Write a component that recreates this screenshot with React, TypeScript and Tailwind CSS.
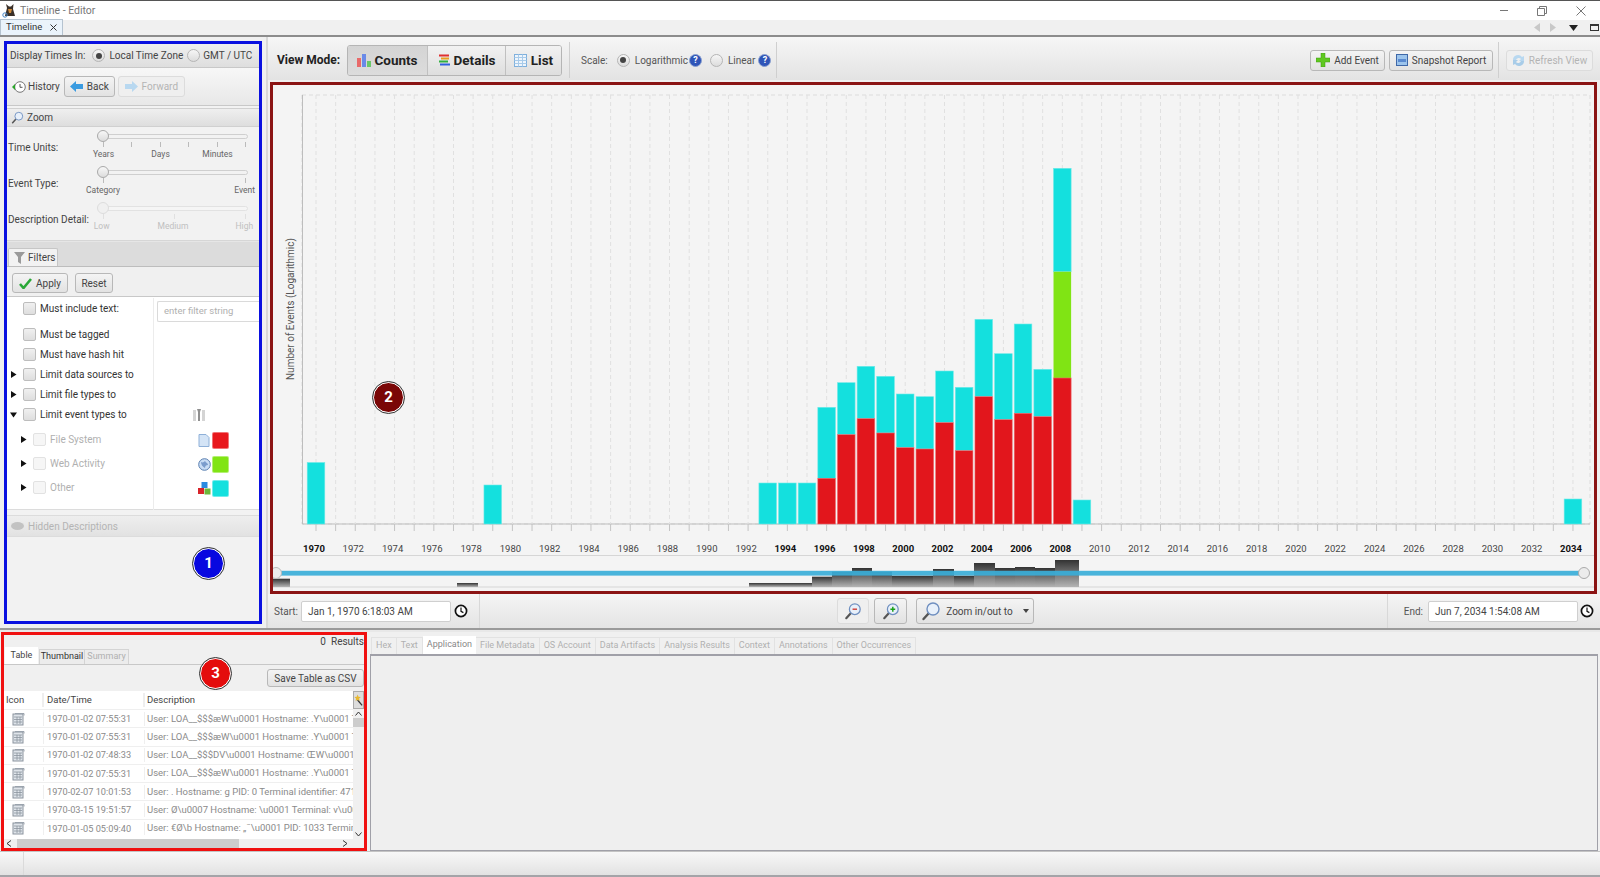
import type { ReactNode } from 'react'

const barWidth = 17.6
const yearX = (year: number) => 316 + 19.64 * (year - 1970)

// year, cyan top, green top, red top, all in page pixels
const bars: [number, number, number | null, number | null][] = [
  [1970, 462.5, null, null],
  [1979, 485, null, null],
  [1993, 483, null, null],
  [1994, 483, null, null],
  [1995, 483, null, null],
  [1996, 407.3, null, 478.3],
  [1997, 382.7, null, 434.7],
  [1998, 366.3, null, 418.7],
  [1999, 376.3, null, 433],
  [2000, 394, null, 447.7],
  [2001, 396.7, null, 449],
  [2002, 371, null, 422.7],
  [2003, 387.3, null, 450.7],
  [2004, 319.3, null, 396.7],
  [2005, 353.7, null, 419.7],
  [2006, 324, null, 413.3],
  [2007, 369.3, null, 416.7],
  [2008, 168.3, 271.7, 378],
  [2009, 500, null, null],
  [2034, 499, null, null],
]

const overview: [number, number, number][] = [
  [271, 19, 578.7],
  [457, 21, 583],
  [749, 21, 583],
  [770, 21, 583],
  [791, 21, 583],
  [812, 20, 576.7],
  [832, 20, 571.7],
  [852, 20, 568],
  [872, 20, 571.7],
  [892, 21, 575.7],
  [913, 20, 575.7],
  [933, 21, 569],
  [954, 20, 575.7],
  [974, 21, 563],
  [995, 20, 568],
  [1015, 20, 567],
  [1035, 20, 568],
  [1055, 24, 560],
]

const boldYears = [1970, 1994, 1996, 1998, 2000, 2002, 2004, 2006, 2008, 2034]

const rows = [
  ['1970-01-02 07:55:31', 'User: LOA__$$$æW\\u0001 Hostname: .Y\\u0001 Terminal: 0 PID: 1033'],
  ['1970-01-02 07:55:31', 'User: LOA__$$$æW\\u0001 Hostname: .Y\\u0001 Terminal: 0 PID: 1033'],
  ['1970-01-02 07:48:33', 'User: LOA__$$$DV\\u0001 Hostname: ŒW\\u0001 Terminal: 0 PID: 1033'],
  ['1970-01-02 07:55:31', 'User: LOA__$$$æW\\u0001 Hostname: .Y\\u0001 Terminal: 0 PID: 1033'],
  ['1970-02-07 10:01:53', 'User: . Hostname: g PID: 0 Terminal identifier: 4718592 Session'],
  ['1970-03-15 19:51:57', 'User: Ø\\u0007 Hostname: \\u0001 Terminal: v\\u0000 PID: 1033 Session'],
  ['1970-01-05 05:09:40', 'User: €Ø\\b Hostname: „˜\\u0001 PID: 1033 Terminal identifier: 0'],
]

function Clock() {
  return (
    <svg width="14" height="14" viewBox="0 0 14 14" className="shrink-0">
      <circle cx="7" cy="7" r="5.6" fill="#fff" stroke="#111" strokeWidth="1.7" />
      <path d="M7 3.6V7.3L9.4 8.6" fill="none" stroke="#111" strokeWidth="1.2" />
    </svg>
  )
}

function Magnifier({ size = 14, sign }: { size?: number; sign?: 'plus' | 'minus' }) {
  return (
    <svg width={size} height={size} viewBox="0 0 20 20" className="shrink-0">
      <path d="M8 12L2.5 18" stroke="#555" strokeWidth="2.4" strokeLinecap="round" />
      <circle cx="12" cy="8" r="6" fill="#e8f0fa" stroke="#6f8fc0" strokeWidth="1.4" />
      {sign === 'minus' ? <path d="M9.5 8h5" stroke="#d0403a" strokeWidth="1.6" /> : null}
      {sign === 'plus' ? <path d="M9.3 8h5.4M12 5.3v5.4" stroke="#18a018" strokeWidth="1.6" /> : null}
    </svg>
  )
}

function Help() {
  return (
    <span className="flex h-[13px] w-[13px] items-center justify-center rounded-full border border-[#8aa0d0] bg-[#2f55b8] text-[9px] font-bold leading-none text-white">
      ?
    </span>
  )
}

function Radio({ on }: { on?: boolean }) {
  return (
    <span className="flex h-[13px] w-[13px] shrink-0 items-center justify-center rounded-full border border-[#b5b5b5] bg-linear-to-b from-[#f6f6f6] to-[#dcdcdc]">
      {on ? <span className="h-[6px] w-[6px] rounded-full bg-[#444]" /> : null}
    </span>
  )
}

function Check({ faint }: { faint?: boolean }) {
  return (
    <span
      className={
        'h-[13px] w-[13px] shrink-0 rounded-[2px] border ' +
        (faint ? 'border-[#e2e2e2] bg-[#f6f6f6]' : 'border-[#bdbdbd] bg-linear-to-b from-[#f0f0f0] to-[#dedede]')
      }
    />
  )
}

function Button({ children, className, faint }: { children: ReactNode; className?: string; faint?: boolean }) {
  return (
    <div
      className={
        'flex items-center justify-center gap-1 whitespace-nowrap rounded-[3px] border text-[10px] ' +
        (faint
          ? 'border-[#dcdcdc] bg-[#efefef] text-[#b4b4b4] '
          : 'border-[#b8b8b8] bg-linear-to-b from-[#f4f4f4] to-[#e2e2e2] text-[#444] ') +
        (className || '')
      }
    >
      {children}
    </div>
  )
}

function Slider({
  ticks,
  labels,
  labelBox,
  label,
  faint,
}: {
  ticks: number
  labels: string[]
  labelBox: string
  label: string
  faint?: boolean
}) {
  return (
    <div className="relative flex h-[36px]">
      <span className="absolute left-0 top-[8px] whitespace-nowrap text-[10px] text-[#444]">{label}</span>
      <div className="relative ml-[91px] w-[149px]">
        <div className={'absolute left-0 right-0 top-[2px] h-[5px] rounded-full border ' + (faint ? 'border-[#e2e2e2] bg-[#f5f5f5]' : 'border-[#cfcfcf] bg-[#f2f2f2]')} />
        <div className={'absolute left-[-2px] top-[-2px] h-[12px] w-[12px] rounded-full border ' + (faint ? 'border-[#dddddd] bg-[#f0f0f0]' : 'border-[#a9a9a9] bg-linear-to-b from-[#f8f8f8] to-[#dcdcdc]')} />
        <div className="absolute left-[4px] right-[2px] top-[10px] flex justify-between">
          {Array.from({ length: ticks }).map((_, i) => (
            <span key={i} className={'h-[5px] w-px ' + (faint ? 'bg-[#e0e0e0]' : 'bg-[#bbb]')} />
          ))}
        </div>
        <div className={'absolute top-[16px] text-[8.5px] ' + labelBox + (faint ? ' text-[#c0c0c0]' : ' text-[#666]')}>
          {labels.map((text) => (
            <span key={text}>{text}</span>
          ))}
        </div>
      </div>
    </div>
  )
}

function Arrow({ open }: { open?: boolean }) {
  return (
    <svg width="7" height="7" viewBox="0 0 7 7" className="shrink-0">
      <path d={open ? 'M0 1.5H7L3.5 6.5Z' : 'M1 0L6.5 3.5L1 7Z'} fill="#111" />
    </svg>
  )
}

function FilterRow({ label, arrow, open, className }: { label: string; arrow?: boolean; open?: boolean; className?: string }) {
  return (
    <div className={'flex h-[20px] items-center ' + (className || '')}>
      <span className="flex w-[16px] shrink-0 justify-start pl-[3px]">{arrow ? <Arrow open={open} /> : null}</span>
      <Check />
      <span className="ml-[4px] whitespace-nowrap text-[10px] text-[#333]">{label}</span>
    </div>
  )
}

function SubRow({ label, swatch, icon }: { label: string; swatch: string; icon: ReactNode }) {
  return (
    <div className="flex h-[24px] items-center">
      <span className="ml-[13px] flex w-[13px] shrink-0"><Arrow /></span>
      <Check faint />
      <span className="ml-[4px] w-[103px] whitespace-nowrap text-[10px] text-[#b0b0b0]">{label}</span>
      <span className="ml-[44px] mt-[3px] flex w-[14px] justify-center">{icon}</span>
      <span className={'ml-[1px] mt-[3px] h-[17px] w-[17px] rounded-[2px] border border-white/40 ' + swatch} />
    </div>
  )
}

function Badge({ n, className }: { n: number; className: string }) {
  return (
    <div
      className={
        'absolute flex h-[31px] w-[31px] items-center justify-center rounded-full border border-white text-[15px] font-bold text-white outline outline-1 outline-[#333] ' +
        className
      }
    >
      {n}
    </div>
  )
}

function TableIcon() {
  return (
    <svg width="13" height="14" viewBox="0 0 13 14">
      <rect x="1" y="2" width="10" height="11" fill="#dfe4ea" stroke="#8b949e" />
      <path d="M2 5h8M2 7.5h8M2 10h8M5 5v7M8 5v7" stroke="#8b949e" strokeWidth="0.8" />
      <path d="M3 1.5h9v2" fill="none" stroke="#9aa3ad" />
    </svg>
  )
}

function Chart() {
  const gridYears = Array.from({ length: 65 }, (_, i) => 1970 + i)
  const labelYears = Array.from({ length: 33 }, (_, i) => 1970 + i * 2)
  return (
    <svg width="1321" height="506" viewBox="273 85 1321 506" className="block">
      <defs>
        <linearGradient id="hist" x1="0" y1="0" x2="0" y2="1">
          <stop offset="0" stopColor="#333" />
          <stop offset="1" stopColor="#b4b4b4" />
        </linearGradient>
      </defs>
      <rect x="302" y="95" width="1288" height="429" fill="none" stroke="#dcdcdc" strokeDasharray="4 3" />
      <path d="M302.5 95V524H1590" fill="none" stroke="#bdbdbd" />
      {gridYears.map((y) => (
        <g key={y}>
          <path d={`M${yearX(y)} 95V524`} stroke="#e0e0e0" strokeDasharray="4 3" />
          <path d={`M${yearX(y)} 524V531`} stroke="#c4c4c4" />
        </g>
      ))}
      {bars.map(([year, cyan, green, red]) => {
        const x = yearX(year) - barWidth / 2
        const cyanEnd = green ?? red ?? 524
        return (
          <g key={year}>
            <rect x={x} y={cyan} width={barWidth} height={cyanEnd - cyan} fill="#14e0de" stroke="#6eeae8" strokeWidth="0.6" />
            {green && red ? <rect x={x} y={green} width={barWidth} height={red - green} fill="#80e414" /> : null}
            {red ? <rect x={x} y={red} width={barWidth} height={524 - red} fill="#e2161c" stroke="#ef6a6e" strokeWidth="0.6" /> : null}
          </g>
        )
      })}
      <text
        x="294"
        y="309"
        transform="rotate(-90 294 309)"
        textAnchor="middle"
        fontSize="10"
        fill="#555"
        fontFamily="Roboto, sans-serif"
      >
        Number of Events (Logarithmic)
      </text>
      {labelYears.map((y) => (
        <text
          key={y}
          x={yearX(y) - 2}
          y="552"
          textAnchor="middle"
          fontSize="9.5"
          fill={boldYears.includes(y) ? '#111' : '#444'}
          fontWeight={boldYears.includes(y) ? 700 : 400}
          fontFamily="Roboto, sans-serif"
        >
          {y}
        </text>
      ))}
      <path d="M273 555.5H1594M273 587H1594" stroke="#d6d6d6" />
      {overview.map(([x, w, top]) => (
        <rect key={x} x={x} y={top} width={w} height={587 - top} fill="url(#hist)" />
      ))}
      <rect x="276" y="570.8" width="1308" height="4.8" fill="#3aaed8" fillOpacity="0.92" />
      <circle cx="276" cy="573" r="5.5" fill="#ececec" stroke="#bbb" />
      <circle cx="1584" cy="573" r="5.5" fill="#ececec" stroke="#aaa" />
    </svg>
  )
}

export default function App() {
  return (
    <div className="relative flex h-[877px] w-[1600px] flex-col overflow-hidden bg-[#f0f0f0] font-['Roboto',sans-serif] text-[#333]">
      {/* title bar */}
      <div className="flex h-[20px] shrink-0 items-center border-t border-[#555] bg-white pl-[2px]">
        <svg width="15" height="15" viewBox="0 0 15 15">
          <path d="M3 13L5 5L4 1L7 3.5H9L11.5 1L11 6L13 13Z" fill="#3a3028" />
          <path d="M6 6H10L9 10H7Z" fill="#d08a3a" />
          <circle cx="3" cy="12" r="2.2" fill="none" stroke="#4a88c8" />
        </svg>
        <span className="ml-[3px] text-[10.5px] text-[#777]">Timeline - Editor</span>
        <div className="ml-auto flex items-center gap-[29px] pr-[14px]">
          <span className="h-px w-[8px] bg-[#777]" />
          <svg width="10" height="10" viewBox="0 0 10 10">
            <path d="M.5 2.5h7v7h-7zM2.5 2.5v-2h7v7h-2" fill="none" stroke="#777" />
          </svg>
          <svg width="10" height="10" viewBox="0 0 10 10">
            <path d="M.5.5l9 9M9.5.5l-9 9" stroke="#777" />
          </svg>
        </div>
      </div>

      {/* window tabs */}
      <div className="flex h-[17px] shrink-0 items-end border-b-2 border-[#8c8c8c] bg-[#f0f0f0]">
        <div className="flex h-[16px] w-[63px] items-center justify-between border border-b-0 border-[#b5c3d0] bg-[#eaf3fb] pl-[5px] pr-[5px] text-[9.5px] text-[#333]">
          Timeline
          <svg width="7" height="7" viewBox="0 0 7 7">
            <path d="M.5.5l6 6M6.5.5l-6 6" stroke="#333" />
          </svg>
        </div>
        <div className="ml-auto flex items-center gap-[8px] pb-[3px] pr-[1px]">
          <svg width="7" height="9" viewBox="0 0 7 9"><path d="M6 0V9L0 4.5Z" fill="#c8c8c8" /></svg>
          <svg width="7" height="9" viewBox="0 0 7 9"><path d="M1 0V9L7 4.5Z" fill="#c8c8c8" /></svg>
          <svg width="9" height="6" viewBox="0 0 9 6" className="ml-[5px]"><path d="M0 0H9L4.5 6Z" fill="#222" /></svg>
          <span className="ml-[4px] h-[7px] w-[9px] border border-t-2 border-[#333]" />
        </div>
      </div>

      {/* top area */}
      <div className="flex h-[591px] shrink-0">
        {/* left panel */}
        <div className="w-[268px] shrink-0 border-r-2 border-[#d8d8d8] pl-[4px] pr-[4px] pt-[4px]">
          <div className="relative flex h-[583px] flex-col border-[3px] border-[#0a10e0] bg-[#f2f2f2]">
            <div className="flex h-[24px] shrink-0 items-center whitespace-nowrap border-b border-[#c8c8c8] bg-linear-to-b from-[#efefef] to-[#dedede] pl-[3px] text-[10px] text-[#444]">
              Display Times In:
              <span className="ml-[7px]"><Radio on /></span>
              <span className="ml-[4px]">Local Time Zone</span>
              <span className="ml-[4px]"><Radio /></span>
              <span className="ml-[3px]">GMT / UTC</span>
            </div>
            <div className="flex h-[38px] shrink-0 items-center border-b border-[#c8c8c8] bg-linear-to-b from-[#f7f7f7] to-[#e8e8e8] pl-[5px] text-[10px] text-[#444]">
              <svg width="14" height="14" viewBox="0 0 14 14">
                <circle cx="8" cy="7" r="5.3" fill="#fff" stroke="#777" />
                <path d="M8 4v3.3h2.5" fill="none" stroke="#555" />
                <path d="M0 7l3-3v6z" fill="#2aa52a" />
              </svg>
              <span className="ml-[2px]">History</span>
              <Button className="ml-[4px] h-[21px] w-[51px]">
                <svg width="13" height="11" viewBox="0 0 13 11"><path d="M0 5.5L6 0V3H13V8H6V11Z" fill="#3a9be0" /></svg>
                Back
              </Button>
              <Button faint className="ml-[3px] h-[21px] w-[67px]">
                <svg width="13" height="11" viewBox="0 0 13 11"><path d="M13 5.5L7 0V3H0V8H7V11Z" fill="#b8d8f0" /></svg>
                Forward
              </Button>
            </div>
            <div className="mt-[2px] flex h-[19px] shrink-0 items-center gap-[3px] border-y border-[#d0d0d0] bg-linear-to-b from-[#efefef] to-[#dedede] pl-[4px] text-[10px] text-[#444]">
              <Magnifier size={13} />
              Zoom
            </div>
            <div className="relative flex-col pl-[1px] pt-[5px]">
              <Slider
                label="Time Units:"
                ticks={6}
                labels={['Years', 'Days', 'Minutes']}
                labelBox="left-[-24px] grid w-[171px] grid-cols-3 text-center"
              />
              <Slider
                label="Event Type:"
                ticks={2}
                labels={['Category', 'Event']}
                labelBox="left-[-13px] flex w-[169px] justify-between"
              />
              <Slider
                faint
                label="Description Detail:"
                ticks={3}
                labels={['Low', 'Medium', 'High']}
                labelBox="left-[-33px] grid w-[214px] grid-cols-3 text-center"
              />
            </div>
            <div className="h-[2px] shrink-0 border-t border-[#d6d6d6] bg-[#e6e6e6]" />
            <div className="flex h-[25px] shrink-0 items-end border-b border-[#bdbdbd] bg-[#dcdcdc] pl-[1px]">
              <div className="flex h-[18px] w-[50px] items-center gap-[3px] rounded-t-[2px] border border-b-0 border-[#c6c6c6] bg-[#f2f2f2] pl-[5px] text-[10px] text-[#444]">
                <svg width="11" height="12" viewBox="0 0 11 12"><path d="M0 0H11L7 5V12L4 10V5Z" fill="#9a9a9a" /></svg>
                Filters
              </div>
            </div>
            <div className="flex h-[30px] shrink-0 items-center gap-[7px] border-b border-[#c8c8c8] bg-[#f0f0f0] pl-[5px] pt-[3px]">
              <Button className="h-[20px] w-[56px]">
                <svg width="13" height="11" viewBox="0 0 13 11"><path d="M1 6L4.5 10L12 1" fill="none" stroke="#2aa838" strokeWidth="2.6" /></svg>
                Apply
              </Button>
              <Button className="h-[20px] w-[38px]">Reset</Button>
            </div>
            <div className="h-[213px] shrink-0 overflow-hidden border-b border-[#dcdcdc] bg-white pt-px">
              <FilterRow label="Must include text:" />
              <FilterRow label="Must be tagged" className="mt-[6.5px]" />
              <FilterRow label="Must have hash hit" />
              <FilterRow label="Limit data sources to" arrow />
              <FilterRow label="Limit file types to" arrow />
              <div className="relative">
                <FilterRow label="Limit event types to" arrow open />
                <svg width="14" height="12" viewBox="0 0 14 12" className="absolute left-[185px] top-[4px]">
                  <path d="M1 1h3v11H1zM10 1h3v11h-3z" fill="#d4d4d4" />
                  <path d="M5 0h4L8 3v9H6V3z" fill="#8f8f8f" />
                </svg>
              </div>
              <div className="mt-[2.5px]">
                <SubRow
                  label="File System"
                  swatch="bg-[#e8171c]"
                  icon={
                    <svg width="12" height="13" viewBox="0 0 12 13"><path d="M1 .5h7l3 3v9H1z" fill="#d4e4f6" stroke="#8fb0d8" /></svg>
                  }
                />
                <SubRow
                  label="Web Activity"
                  swatch="bg-[#80e414]"
                  icon={
                    <svg width="13" height="13" viewBox="0 0 13 13">
                      <circle cx="6.5" cy="6.5" r="5.8" fill="#c8dcf4" stroke="#5a7fb0" />
                      <path d="M3 4c2 1 3 0 4-1 1 2 3 2 3 4-2 0-3 1-3 3-2-1-4-3-4-6z" fill="#7a9ccc" />
                    </svg>
                  }
                />
                <SubRow
                  label="Other"
                  swatch="bg-[#14e0de]"
                  icon={
                    <svg width="13" height="13" viewBox="0 0 13 13">
                      <rect x="0" y="6" width="6" height="6" fill="#d8232a" />
                      <rect x="3.5" y="0" width="6" height="6" fill="#2a8ae0" />
                      <rect x="6.5" y="6.5" width="6" height="6" fill="#6cb83a" />
                    </svg>
                  }
                />
              </div>
            </div>
            <div className="mt-[5px] flex h-[22px] shrink-0 items-center gap-[4px] border-y border-[#dcdcdc] bg-linear-to-b from-[#eeeeee] to-[#e2e2e2] pl-[4px] text-[10px] text-[#b4b4b4]">
              <svg width="13" height="8" viewBox="0 0 13 8"><ellipse cx="6.5" cy="4" rx="6.5" ry="4" fill="#c2c2c2" /></svg>
              Hidden Descriptions
            </div>
            {/* text filter field sits over the tree's right column */}
            <div className="absolute left-[146px] top-[254px] h-[212px] w-px bg-[#ececec]" />
            <div className="absolute left-[150px] top-[257px] flex h-[21px] w-[102px] items-center rounded-l-[2px] border border-r-0 border-[#dadada] bg-white pl-[6px] text-[9.5px] text-[#b0b0b0]">
              enter filter string
            </div>
          </div>
        </div>

        {/* main panel */}
        <div className="flex min-w-0 flex-1 flex-col pr-[3px]">
          <div className="-mr-[3px] flex h-[43px] shrink-0 items-center bg-linear-to-b from-[#f6f6f6] to-[#e3e3e3] pl-[9px] pr-[7px] pt-[3px]">
            <span className="w-[68px] whitespace-nowrap text-[12px] font-bold text-[#222]">View Mode:</span>
            <div className="ml-[2px] flex h-[31px] w-[215px] overflow-hidden rounded-[3px] border border-[#b5b5b5] text-[13.5px] font-bold text-[#222]">
              <div className="flex w-[79px] items-center justify-center gap-[3px] bg-linear-to-b from-[#d4d4d4] to-[#dcdcdc]">
                <svg width="14" height="14" viewBox="0 0 14 14">
                  <rect x="0" y="5" width="4" height="9" fill="#e86a6a" />
                  <rect x="5" y="1" width="4" height="13" fill="#6a8ae8" />
                  <rect x="10" y="8" width="4" height="6" fill="#6ac86a" />
                </svg>
                Counts
              </div>
              <div className="flex w-[78px] items-center justify-center gap-[4px] border-l border-[#c0c0c0] bg-linear-to-b from-[#f2f2f2] to-[#dedede]">
                <svg width="12" height="12" viewBox="0 0 12 12">
                  <path d="M1 1.5h10" stroke="#e03030" strokeWidth="2" />
                  <path d="M3 4.5h8" stroke="#e8a020" strokeWidth="2" />
                  <path d="M1 7.5h9" stroke="#30b040" strokeWidth="2" />
                  <path d="M2 10.5h10" stroke="#3060e0" strokeWidth="2" />
                </svg>
                Details
              </div>
              <div className="flex flex-1 items-center justify-center gap-[4px] border-l border-[#c0c0c0] bg-linear-to-b from-[#f2f2f2] to-[#dedede]">
                <svg width="13" height="13" viewBox="0 0 13 13">
                  <rect x=".5" y=".5" width="12" height="12" fill="#eef5fc" stroke="#7fb0dc" />
                  <path d="M.5 3.5h12M.5 6.5h12M.5 9.5h12M4.5 .5v12M8.5 .5v12" stroke="#a8cbea" />
                </svg>
                List
              </div>
            </div>
            <span className="ml-[7px] h-[36px] w-px bg-[#cfcfcf]" />
            <span className="ml-[11px] text-[10px] text-[#555]">Scale:</span>
            <span className="ml-[9px]"><Radio on /></span>
            <span className="ml-[5px] text-[10px] text-[#555]">Logarithmic</span>
            <span className="ml-[1px]"><Help /></span>
            <span className="ml-[8px]"><Radio /></span>
            <span className="ml-[5px] text-[10px] text-[#555]">Linear</span>
            <span className="ml-[3px]"><Help /></span>
            <span className="ml-[5px] h-[36px] w-px bg-[#cfcfcf]" />
            <div className="ml-auto flex items-center">
              <Button className="h-[21px] w-[75px]">
                <svg width="14" height="14" viewBox="0 0 14 14"><path d="M5 0h4v5h5v4H9v5H5V9H0V5h5z" fill="#60c820" stroke="#3c9a10" strokeWidth=".5" /></svg>
                Add Event
              </Button>
              <Button className="ml-[4px] h-[21px] w-[104px]">
                <svg width="12" height="12" viewBox="0 0 12 12">
                  <rect x=".5" y=".5" width="11" height="11" fill="#9cc4ec" stroke="#3f68a8" />
                  <rect x="2" y="5" width="8" height="3" fill="#5a8ad0" />
                </svg>
                Snapshot Report
              </Button>
              <span className="ml-[5px] h-[36px] w-px bg-[#cfcfcf]" />
              <Button faint className="ml-[7px] h-[21px] w-[87px]">
                <svg width="13" height="13" viewBox="0 0 13 13">
                  <path d="M1 6a5 5 0 0 1 9-3l2-1v5H7l2-2a3 3 0 0 0-5 1z" fill="#b8d8f0" />
                  <path d="M12 7a5 5 0 0 1-9 3l-2 1V6h5L4 8a3 3 0 0 0 5-1z" fill="#a8cce8" />
                </svg>
                Refresh View
              </Button>
            </div>
          </div>

          <div className="ml-[2px] mt-[2px] h-[512px] shrink-0 border-[3px] border-[#8b1414] bg-[#f4f4f4]">
            <Chart />
          </div>

          <div className="-mr-[3px] flex h-[34px] shrink-0 items-center bg-linear-to-b from-[#f5f5f5] to-[#e4e4e4] pl-[6px] text-[10px] text-[#555]">
            <div className="flex h-full w-[206px] items-center border-r border-[#d8d8d8]">
              <span className="w-[22px]">Start:</span>
              <div className="ml-[5px] flex h-[21px] w-[150px] items-center rounded-[2px] border border-[#cfcfcf] bg-white pl-[6px] text-[10px] text-[#444]">
                Jan 1, 1970 6:18:03 AM
              </div>
              <span className="ml-[3px]"><Clock /></span>
            </div>
            <Button faint className="ml-[357px] h-[26px] w-[32px]"><Magnifier size={18} sign="minus" /></Button>
            <Button className="ml-[5px] h-[26px] w-[33px]"><Magnifier size={18} sign="plus" /></Button>
            <Button className="ml-[9px] h-[26px] w-[118px] gap-[5px]">
              <Magnifier size={20} />
              Zoom in/out to
              <svg width="6" height="4" viewBox="0 0 6 4" className="ml-[5px]"><path d="M0 0H6L3 4Z" fill="#444" /></svg>
            </Button>
            <div className="ml-auto flex h-full items-center border-l border-[#d8d8d8] pl-[16px] pr-[6px]">
              <span>End:</span>
              <div className="ml-[5px] flex h-[21px] w-[150px] items-center rounded-[2px] border border-[#cfcfcf] bg-white pl-[6px] text-[10px] text-[#444]">
                Jun 7, 2034 1:54:08 AM
              </div>
              <span className="ml-[2px]"><Clock /></span>
            </div>
          </div>
        </div>
      </div>

      <div className="h-[4px] shrink-0 border-t-2 border-[#9a9a9a] bg-[#e8e8e8]" />

      {/* bottom area */}
      <div className="flex h-[219px] shrink-0">
        <div className="relative ml-px flex w-[366px] shrink-0 flex-col border-[3px] border-[#f01010] bg-[#f0f0f0]">
          <div className="flex h-[12px] shrink-0 items-center justify-end whitespace-nowrap text-[10px] text-[#444]">
            0 <span className="ml-[5px]">Results</span>
          </div>
          <div className="flex h-[18px] shrink-0 items-end border-b border-[#c8c8c8] pl-[1px] text-[9px]">
            <div className="flex h-[17px] w-[33px] items-center justify-center bg-white text-[#444]">Table</div>
            <div className="ml-[1px] flex h-[15px] w-[46px] items-center justify-center border border-b-0 border-[#d4d4d4] bg-[#ececec] text-[#333]">Thumbnail</div>
            <div className="flex h-[15px] w-[44px] items-center justify-center border border-b-0 border-l-0 border-[#d4d4d4] bg-[#ececec] text-[#b0b0b0]">Summary</div>
          </div>
          <div className="flex h-[26px] shrink-0 items-center justify-end">
            <Button className="h-[18px] w-[97px] text-[9.5px]">Save Table as CSV</Button>
          </div>
          <div className="flex min-h-0 flex-1 flex-col">
            <div className="flex h-[18px] shrink-0 items-start bg-white pt-[2px] text-[9.5px] text-[#444]">
              <span className="w-[40px] border-r-2 border-[#eee] pl-[2px]">Icon</span>
              <span className="w-[101px] border-r-2 border-[#eee] pl-[3px]">Date/Time</span>
              <span className="flex-1 pl-[2px]">Description</span>
              <span className="-mt-[2px] flex h-[18px] w-[11px] items-center justify-center border border-[#aaa] bg-[#ddd]">
                <svg width="10" height="14" viewBox="0 0 10 14">
                  <path d="M4 7L9 13" stroke="#333" strokeWidth="1.4" />
                  <path d="M4 1l1 2.4 2.6.3-1.9 1.7.5 2.6L4 6.700 1.800 8l.5-2.600L.4 3.700 3 3.400z" fill="#e8b830" />
                </svg>
              </span>
            </div>
            <div className="flex min-h-0 flex-1">
              <div className="min-w-0 flex-1 overflow-hidden bg-white">
                {rows.map(([date, text], i) => (
                  <div key={i} className="flex h-[18.3px] items-center border-t border-[#efefef] text-[9.5px] text-[#8a8a8a]">
                    <span className="flex w-[40px] shrink-0 justify-start border-r border-[#efefef] pl-[8px]"><TableIcon /></span>
                    <span className="w-[101px] shrink-0 whitespace-nowrap border-r border-[#efefef] pl-[3px] text-[9.2px]">{date}</span>
                    <span className="overflow-hidden whitespace-nowrap pl-[2px]">{text}</span>
                  </div>
                ))}
              </div>
              <div className="flex w-[11px] shrink-0 flex-col items-center bg-[#f0f0f0] pt-[2px]">
                <svg width="7" height="5" viewBox="0 0 7 5"><path d="M.5 4.500L3.500 1L6.500 4.500" fill="none" stroke="#333" /></svg>
                <span className="mt-[2px] h-[9px] w-full bg-[#cdcdcd]" />
                <svg width="7" height="5" viewBox="0 0 7 5" className="mb-[2px] mt-auto"><path d="M.5 .5L3.500 4L6.500 .5" fill="none" stroke="#333" /></svg>
              </div>
            </div>
            <div className="flex h-[9px] shrink-0 items-center bg-[#f0f0f0]">
              <svg width="13" height="7" viewBox="0 0 13 7" className="shrink-0"><path d="M7 .5L3 3.500L7 6.500" fill="none" stroke="#333" /></svg>
              <span className="h-full w-[222px] bg-[#cdcdcd]" />
              <svg width="7" height="7" viewBox="0 0 7 7" className="ml-auto mr-[16px] shrink-0"><path d="M2 .5L6 3.500L2 6.500" fill="none" stroke="#333" /></svg>
            </div>
          </div>
        </div>

        <div className="ml-[3px] mr-[2px] flex min-w-0 flex-1 flex-col pt-[4px]">
          <div className="flex h-[18px] shrink-0 items-end pl-[1px] text-[9px] text-[#b0b0b0]">
            {['Hex', 'Text', 'Application', 'File Metadata', 'OS Account', 'Data Artifacts', 'Analysis Results', 'Context', 'Annotations', 'Other Occurrences'].map((tab) => (
              <div
                key={tab}
                className={
                  tab === 'Application'
                    ? 'flex h-[18px] items-center bg-white px-[4px] pb-[1px] text-[#888]'
                    : 'flex h-[17px] items-center border border-b-0 border-l-0 border-[#e2e2e2] bg-[#f0f0f0] px-[4px] pb-[1px] first:border-l'
                }
              >
                {tab}
              </div>
            ))}
          </div>
          <div className="flex-1 border-x border-b border-t-2 border-[#a0a0a8] bg-[#efefef]" />
        </div>
      </div>

      {/* status bar */}
      <div className="flex min-h-0 flex-1 border-b-2 border-t border-b-[#a4a4a8] border-t-[#c4c4c4] bg-linear-to-b from-[#f8f8f8] to-[#e2e2e2]">
        <span className="ml-[23px] h-full w-px bg-[#dadada]" />
      </div>

      <Badge n={1} className="left-[193px] top-[548px] bg-[#0808e0]" />
      <Badge n={2} className="left-[373px] top-[382px] bg-[#7a0606]" />
      <Badge n={3} className="left-[200px] top-[658px] bg-[#e40c0c]" />
    </div>
  )
}
